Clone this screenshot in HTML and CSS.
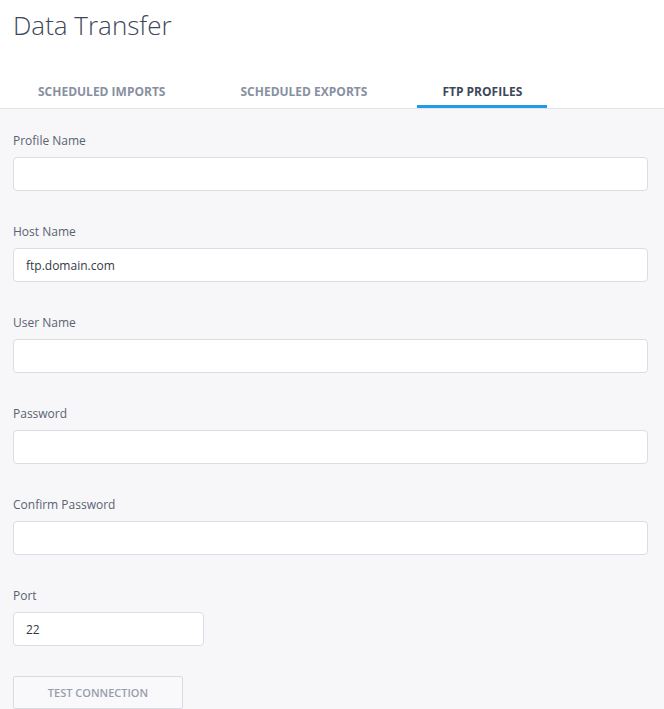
FILE: index.html
```html
<!DOCTYPE html>
<html>
<head>
<meta charset="utf-8">
<link rel="stylesheet" href="styles.css">
</head>
<body>
<div class="header">
  <h1 class="title">Data Transfer</h1>
  <nav class="tabs">
    <div class="tab">Scheduled Imports</div>
    <div class="tab">Scheduled Exports</div>
    <div class="tab active">FTP Profiles</div>
  </nav>
</div>
<div class="form">
  <div class="field">
    <label class="label">Profile Name</label>
    <input class="input" type="text" value="">
  </div>
  <div class="field">
    <label class="label">Host Name</label>
    <input class="input" type="text" value="ftp.domain.com">
  </div>
  <div class="field">
    <label class="label">User Name</label>
    <input class="input" type="text" value="">
  </div>
  <div class="field">
    <label class="label">Password</label>
    <input class="input" type="password" value="">
  </div>
  <div class="field">
    <label class="label">Confirm Password</label>
    <input class="input" type="password" value="">
  </div>
  <div class="field">
    <label class="label">Port</label>
    <input class="input input-short" type="text" value="22">
  </div>
  <button class="btn">Test Connection</button>
</div>
</body>
</html>
```

FILE: styles.css
```css
html, body {
  margin: 0;
  padding: 0;
  background: #f7f7f9;
  font-family: "Open Sans", "Liberation Sans", sans-serif;
}
.header {
  background: #ffffff;
  border-bottom: 1px solid #e2e3e8;
}
.title {
  margin: 0;
  padding: 6px 13px 0;
  font-size: 26px;
  font-weight: 300;
  line-height: 38px;
  color: #3d4759;
}
.tabs {
  display: flex;
  gap: 25px;
  padding: 0 13px;
  margin-top: 36px;
}
.tab {
  padding: 0 25px;
  height: 28px;
  line-height: 24px;
  font-size: 12px;
  font-weight: 700;
  text-transform: uppercase;
  color: #8790a1;
  border-bottom: 3px solid transparent;
  box-sizing: border-box;
  white-space: nowrap;
}
.tab.active {
  color: #3d4759;
  border-bottom-color: #1f9be8;
}
.form {
  display: flex;
  flex-direction: column;
  align-items: flex-start;
  padding: 23px 16px 0 13px;
}
.field {
  display: flex;
  flex-direction: column;
  align-self: stretch;
}
.field + .field {
  margin-top: 32px;
}
.label {
  font-size: 12px;
  line-height: 18px;
  color: #5a6272;
  margin-bottom: 7px;
}
.input {
  box-sizing: border-box;
  height: 34px;
  border: 1px solid #dcdde2;
  border-radius: 4px;
  background: #ffffff;
  padding: 0 12px;
  font-family: "Open Sans", "Liberation Sans", sans-serif;
  font-size: 12px;
  color: #333a45;
  outline: none;
}
.input-short {
  width: 191px;
}
.btn {
  box-sizing: border-box;
  margin-top: 30px;
  width: 170px;
  height: 33px;
  border: 1px solid #dadbe0;
  border-radius: 2px;
  background: #f9f9fb;
  font-family: "Open Sans", "Liberation Sans", sans-serif;
  font-size: 11px;
  font-weight: 600;
  text-transform: uppercase;
  color: #979dab;
  padding: 0;
}
```
